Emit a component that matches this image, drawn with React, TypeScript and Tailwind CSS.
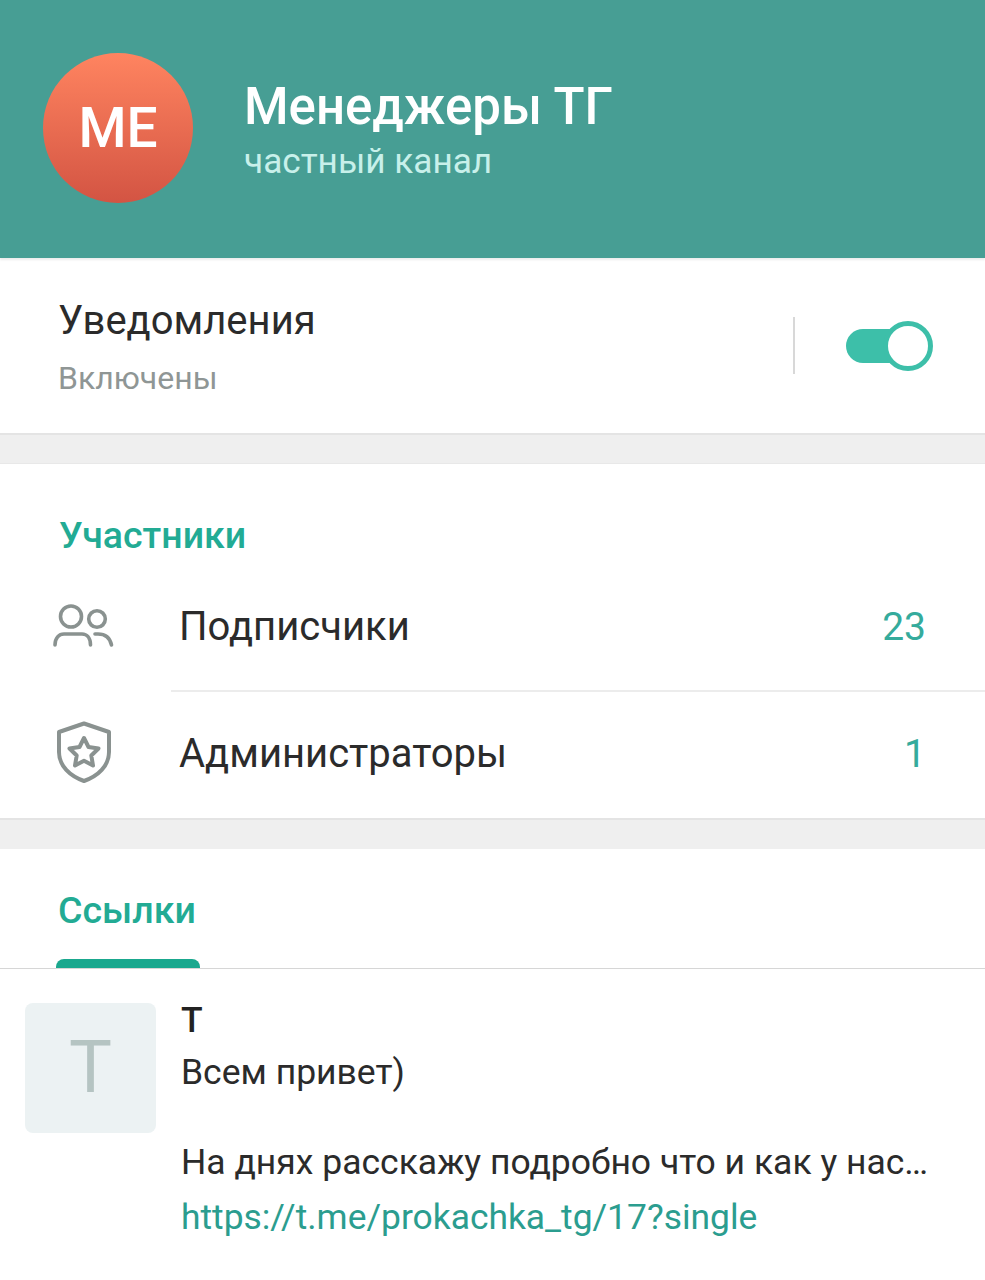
function GroupIcon() {
  return (
    <svg width="64" height="46" viewBox="0 0 64 46" fill="none" stroke="#8a9290" strokeWidth="3.6" strokeLinecap="round">
      <circle cx="19" cy="13.500" r="10.500" />
      <circle cx="45" cy="16" r="8.300" />
      <path d="M3 42c0-7 4-11 9-11h18c5 0 8.500 4 8.500 11" />
      <path d="M43 31h3c7 0 12 4 13.500 11" />
    </svg>
  );
}

function ShieldIcon() {
  return (
    <svg width="56" height="62" viewBox="0 0 56 62" fill="none" stroke="#8a9290" strokeWidth="4" strokeLinejoin="round">
      <path d="M28 2.500 L53 11 V31 C53 45 42 55 28 60 C14 55 3 45 3 31 V11 Z" />
      <path d="M28 17 L32.500 26 L42.500 27.500 L35.300 34.500 L37 44.500 L28 39.800 L19 44.500 L20.700 34.500 L13.500 27.500 L23.500 26 Z" />
    </svg>
  );
}

function Row({ icon, label, count, lift }: { icon: React.ReactNode; label: string; count: string; lift?: boolean }) {
  return (
    <div className={lift ? "flex h-[126px] items-center pb-[2px]" : "flex h-[126px] items-center"}>
      <div className={lift ? "flex w-[171px] shrink-0 justify-center pb-[5px] pr-[4px]" : "flex w-[171px] shrink-0 justify-center pb-[3px] pr-[4px]"}>{icon}</div>
      <div className="pl-[8px] text-[40px] leading-none text-[#2b2b2b]">{label}</div>
      <div className="ml-auto pr-[59px] text-[39px] leading-none text-[#35ab9c]">{count}</div>
    </div>
  );
}

export default function App() {
  return (
    <div className="h-[1280px] w-[985px] overflow-hidden bg-white font-['Roboto',sans-serif]">
      {/* header */}
      <div className="relative flex h-[258px] items-start bg-[#479e94] pl-[43px] pt-[53px] shadow-[0_2px_2px_rgba(0,0,0,0.08)]">
        <div className="flex h-[150px] w-[150px] shrink-0 items-center justify-center rounded-full bg-gradient-to-b from-[#ff8460] to-[#d35443] text-[55px] font-medium text-white">
          ME
        </div>
        <div className="pl-[51px] pt-[21px]">
          <div className="text-[51px] font-medium leading-[65px] text-white">Менеджеры ТГ</div>
          <div className="text-[35.200px] leading-[44px] text-[#c8f0ea]">частный канал</div>
        </div>
      </div>

      {/* notifications */}
      <div className="flex h-[177px] items-center border-b-2 border-[#e4e4e4] pl-[58px] pr-[53px]">
        <div className="pt-[4px]">
          <div className="text-[40px] leading-[50px] text-[#2b2b2b]">Уведомления</div>
          <div className="mt-[11px] text-[32px] leading-[42px] text-[#8f9695]">Включены</div>
        </div>
        <div className="ml-auto h-[57px] w-[2px] bg-[#d8d8d8]" />
        <div className="relative ml-[51px] h-[34px] w-[86px]">
          <div className="absolute left-0 top-0 h-[34px] w-[60px] rounded-full bg-[#3dbfa9]" />
          <div className="absolute -top-[8px] left-[37px] h-[50px] w-[50px] rounded-full border-[5px] border-[#3dbfa9] bg-white" />
        </div>
      </div>
      <div className="h-[28px] bg-[#efefef]" />

      {/* participants */}
      <div className="border-t border-[#e8e8e8] border-b-2 border-b-[#e4e4e4]">
        <div className="pl-[59px] pt-[49px] text-[37.500px] font-medium leading-[44px] text-[#22ab94]">Участники</div>
        <div className="mt-[7px]">
          <Row icon={<GroupIcon />} label="Подписчики" count="23" />
          <div className="ml-[171px] h-[2px] bg-[#ececec]" />
          <Row icon={<ShieldIcon />} label="Администраторы" count="1" lift />
        </div>
      </div>
      <div className="h-[29px] bg-[#efefef]" />

      {/* links tab */}
      <div className="border-b border-[#d6d6d6]">
        <div className="ml-[56px] w-[144px]">
          <div className="pl-[2px] pt-[37px] text-[37.500px] font-medium leading-[48px] text-[#22ab94]">Ссылки</div>
          <div className="mt-[25px] h-[9px] rounded-t-[8px] bg-[#1aa88e]" />
        </div>
      </div>

      {/* link item */}
      <div className="flex pl-[25px] pr-[40px] pt-[34px]">
        <div className="flex h-[130px] w-[131px] shrink-0 items-center justify-center rounded-[8px] bg-[#ecf2f3] text-[72px] leading-none text-[#b5c4c2]">
          T
        </div>
        <div className="min-w-0 flex-1 pl-[25px]">
          <div className="-mt-[8px] mb-[1px] text-[35.500px] font-medium leading-[50px] text-[#222222]">T</div>
          <div className="text-[35.500px] leading-[52px] text-[#2b2b2b]">Всем привет)</div>
          <div className="mt-[38px] whitespace-nowrap text-[35.500px] leading-[52px] text-[#2b2b2b]">На днях расскажу подробно что и как у нас…</div>
          <div className="text-[35.400px] leading-[58px] text-[#2b9d8f]">https://t.me/prokachka_tg/17?single</div>
        </div>
      </div>
    </div>
  );
}
